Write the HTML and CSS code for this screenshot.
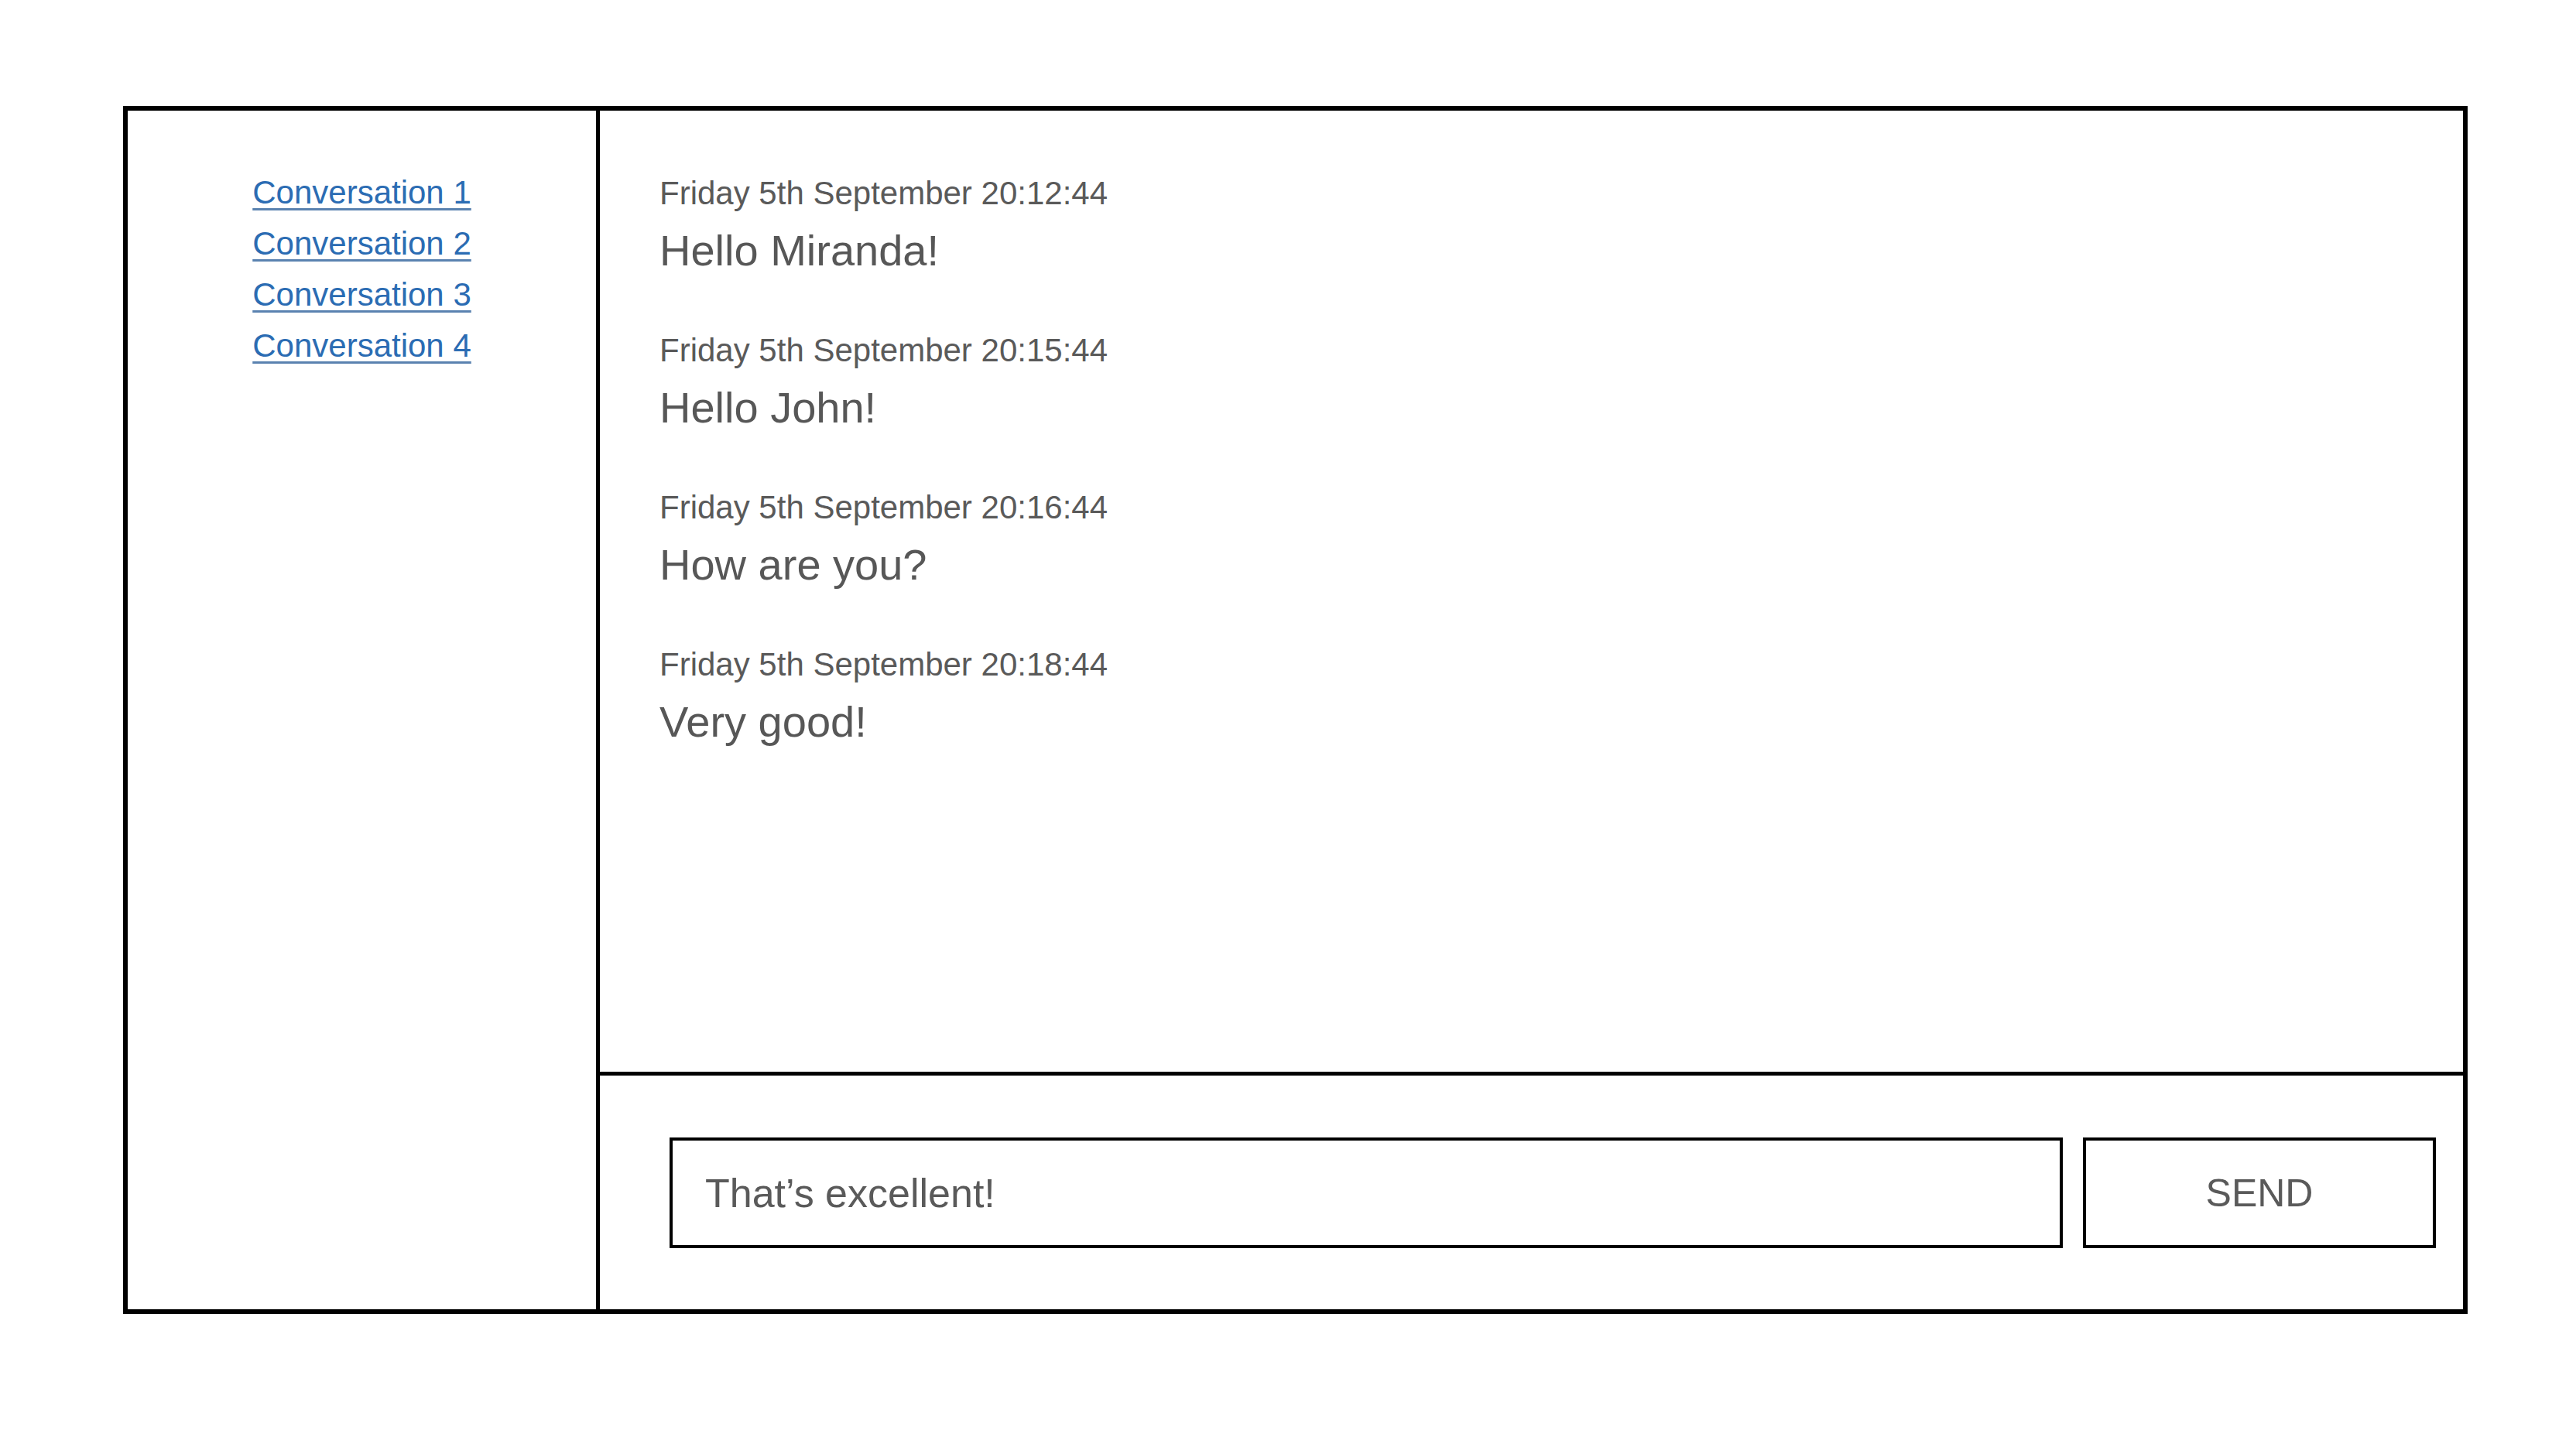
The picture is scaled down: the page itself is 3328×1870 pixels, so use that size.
FILE: index.html
```html
<!DOCTYPE html>
<html lang="en">
<head>
<meta charset="utf-8">
<title>Chat</title>
<link rel="stylesheet" href="styles.css">
</head>
<body>
<div class="app">
  <nav class="sidebar">
    <a class="conv-link" href="#">Conversation 1</a>
    <a class="conv-link" href="#">Conversation 2</a>
    <a class="conv-link" href="#">Conversation 3</a>
    <a class="conv-link" href="#">Conversation 4</a>
  </nav>
  <main class="chat">
    <section class="messages">
      <div class="message">
        <div class="timestamp">Friday 5th September 20:12:44</div>
        <div class="text">Hello Miranda!</div>
      </div>
      <div class="message">
        <div class="timestamp">Friday 5th September 20:15:44</div>
        <div class="text">Hello John!</div>
      </div>
      <div class="message">
        <div class="timestamp">Friday 5th September 20:16:44</div>
        <div class="text">How are you?</div>
      </div>
      <div class="message">
        <div class="timestamp">Friday 5th September 20:18:44</div>
        <div class="text">Very good!</div>
      </div>
    </section>
    <form class="composer" onsubmit="return false;">
      <input class="composer-input" type="text" value="That’s excellent!">
      <button class="send-button" type="button">SEND</button>
    </form>
  </main>
</div>
</body>
</html>
```

FILE: styles.css
```css
html, body {
  margin: 0;
  padding: 0;
  background: #ffffff;
}

body {
  font-family: "Liberation Sans", Arial, Helvetica, sans-serif;
  color: #585858;
  padding: 137px 0 0 159px;
}

.app {
  box-sizing: border-box;
  width: 3029px;
  height: 1561px;
  border: 6px solid #000;
  display: flex;
}

.sidebar {
  box-sizing: border-box;
  width: 610px;
  flex: none;
  border-right: 5px solid #000;
  padding-top: 73px;
  display: flex;
  flex-direction: column;
  align-items: center;
}

.conv-link {
  font-size: 42px;
  line-height: 66px;
  color: #2b6cb3;
  text-decoration: underline;
  text-decoration-thickness: 3px;
  text-underline-offset: 6px;
  text-decoration-color: #5a82b0;
}

.chat {
  flex: 1;
  display: flex;
  flex-direction: column;
  min-width: 0;
}

.messages {
  flex: 1;
  padding: 82px 0 0 77px;
}

.message {
  margin-bottom: 71px;
}

.timestamp {
  font-size: 42px;
  line-height: 50px;
  color: #5a5a5a;
}

.text {
  margin-top: 16px;
  font-size: 56px;
  line-height: 66px;
  color: #575757;
}

.composer {
  box-sizing: border-box;
  height: 307px;
  flex: none;
  margin: 0;
  border-top: 5px solid #000;
  padding: 80px 35px 79px 90px;
  display: flex;
  gap: 26px;
}

.composer-input {
  box-sizing: border-box;
  flex: 1;
  min-width: 0;
  height: 143px;
  margin: 0;
  border: 4px solid #000;
  border-radius: 0;
  padding: 0 0 0 42px;
  background: #fff;
  font-family: "Liberation Sans", Arial, Helvetica, sans-serif;
  font-size: 52px;
  color: #5a5a5a;
  outline: none;
}

.send-button {
  box-sizing: border-box;
  width: 456px;
  height: 143px;
  flex: none;
  margin: 0;
  border: 4px solid #000;
  border-radius: 0;
  background: #fff;
  font-family: "Liberation Sans", Arial, Helvetica, sans-serif;
  font-size: 50px;
  color: #5a5a5a;
  padding: 0;
  cursor: pointer;
}
```
